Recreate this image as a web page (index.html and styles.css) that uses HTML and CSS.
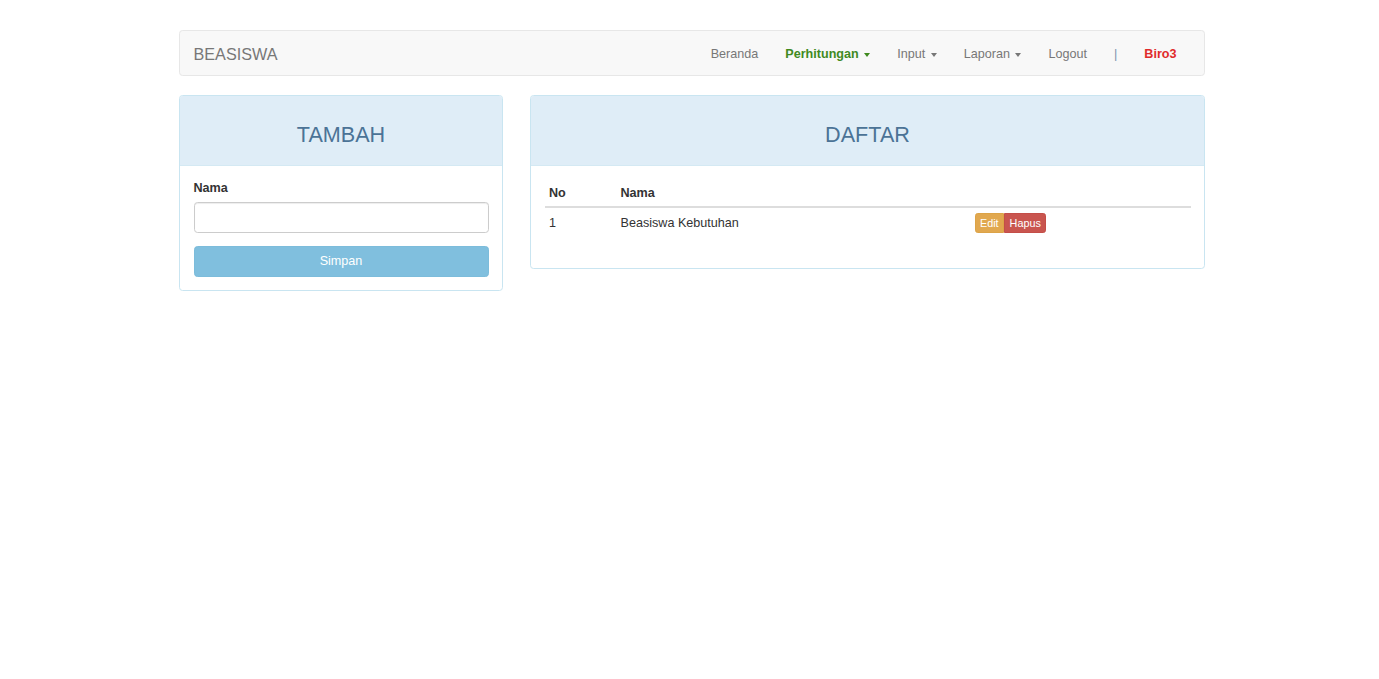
FILE: index.html
```html
<!DOCTYPE html>
<html lang="id">
<head>
<meta charset="utf-8">
<title>Beasiswa</title>
<link rel="stylesheet" href="styles.css">
</head>
<body>
<div class="container">
  <nav class="navbar">
    <a class="brand" href="#">BEASISWA</a>
    <ul class="nav">
      <li><a href="#">Beranda</a></li>
      <li><a href="#" class="active">Perhitungan <span class="caret"></span></a></li>
      <li><a href="#">Input <span class="caret"></span></a></li>
      <li><a href="#">Laporan <span class="caret"></span></a></li>
      <li><a href="#">Logout</a></li>
      <li><span class="sep">|</span></li>
      <li><a href="#" class="user">Biro3</a></li>
    </ul>
  </nav>
  <div class="row">
    <div class="col col-4">
      <div class="panel">
        <div class="panel-heading"><h3>TAMBAH</h3></div>
        <div class="panel-body">
          <div class="form-group">
            <label class="label">Nama</label>
            <input class="input" type="text">
          </div>
          <button class="btn-simpan" type="button">Simpan</button>
        </div>
      </div>
    </div>
    <div class="col col-8">
      <div class="panel">
        <div class="panel-heading"><h3>DAFTAR</h3></div>
        <div class="panel-body">
          <table class="table">
            <thead>
              <tr><th class="c-no">No</th><th class="c-nama">Nama</th><th></th></tr>
            </thead>
            <tbody>
              <tr>
                <td>1</td>
                <td>Beasiswa Kebutuhan</td>
                <td><span class="btn-group"><a class="btn-xs btn-edit" href="#">Edit</a><a class="btn-xs btn-hapus" href="#">Hapus</a></span></td>
              </tr>
            </tbody>
          </table>
        </div>
      </div>
    </div>
  </div>
</div>
</body>
</html>
```

FILE: styles.css
```css
* { box-sizing: border-box; }
html, body { margin: 0; padding: 0; background: #fff; }
body {
  font-family: "Liberation Sans", Arial, sans-serif;
  font-size: 12.6px;
  line-height: 18px;
  color: #333;
  padding-top: 30px;
}
a { text-decoration: none; }
.container {
  width: 1026px;
  margin-left: calc(50% - 510.5px);
}
.navbar {
  display: flex;
  align-items: center;
  justify-content: space-between;
  height: 46px;
  background: #f8f8f8;
  border: 1px solid #e7e7e7;
  border-radius: 3.6px;
  padding: 0 0 0 13.5px;
  margin-bottom: 19px;
}
.brand {
  font-size: 16.2px;
  line-height: 18px;
  color: #777;
  padding-top: 1px;
}
.nav {
  list-style: none;
  display: flex;
  margin: 0;
  padding: 0 14px 0 0;
}
.nav li a, .nav li .sep {
  display: block;
  padding: 14px 13.5px 12px;
  color: #777;
  line-height: 18px;
}
.nav li .sep { color: #7d93ad; }
.nav li a.active { color: #3f8a1f; font-weight: bold; }
.nav li a.user { color: #e02b2b; font-weight: bold; }
.caret {
  display: inline-block;
  width: 0;
  height: 0;
  margin-left: 2px;
  vertical-align: middle;
  border-top: 4px solid;
  border-left: 3.8px solid transparent;
  border-right: 3.8px solid transparent;
}
.row {
  display: flex;
  margin: 0 -13.5px;
  align-items: flex-start;
}
.col { padding: 0 13.5px; }
.col-4 { width: 351px; }
.col-8 { width: 702px; }
.panel {
  background: #fff;
  border: 1px solid #c9e5f1;
  border-radius: 3.6px;
}
.panel-heading {
  background: #dfedf7;
  border-bottom: 1px solid #d4e9f3;
  border-radius: 2.6px 2.6px 0 0;
  padding: 9px 13.5px 10px;
  text-align: center;
}
.panel-heading h3 {
  margin: 18px 0 8px;
  font-size: 21.6px;
  line-height: 23.8px;
  font-weight: normal;
  color: #4b7396;
}
.panel-body { padding: 13.5px; }
.form-group { margin-bottom: 13px; }
.label {
  display: block;
  font-weight: bold;
  margin-bottom: 5px;
}
.input {
  display: block;
  width: 100%;
  height: 30.6px;
  border: 1px solid #ccc;
  border-radius: 3.6px;
  box-shadow: inset 0 1px 1px rgba(0,0,0,.075);
  font: inherit;
  padding: 5px 11px;
}
.btn-simpan {
  display: block;
  width: 100%;
  height: 31px;
  background: #80bfde;
  border: 1px solid #7cbcdb;
  border-radius: 3.6px;
  color: #fff;
  font: inherit;
  padding: 0;
}
.table {
  width: 100%;
  border-collapse: collapse;
  margin-bottom: 17px;
}
.table th, .table td {
  text-align: left;
  padding: 4.5px;
  line-height: 18px;
  vertical-align: middle;
}
.table th {
  font-weight: bold;
  border-bottom: 2px solid #ddd;
}
.c-no { width: 71.5px; }
.c-nama { width: 354px; }
.btn-group { display: inline-flex; vertical-align: middle; }
.btn-xs {
  display: inline-block;
  font-size: 10.8px;
  line-height: 16px;
  padding: 1px 4.5px;
  color: #fff;
  border: 1px solid transparent;
}
.btn-edit {
  background: #e1a84f;
  border-color: #dca347;
  border-radius: 2.7px 0 0 2.7px;
}
.btn-hapus {
  background: #c9554f;
  border-color: #c44e48;
  border-radius: 0 2.7px 2.7px 0;
}
```
